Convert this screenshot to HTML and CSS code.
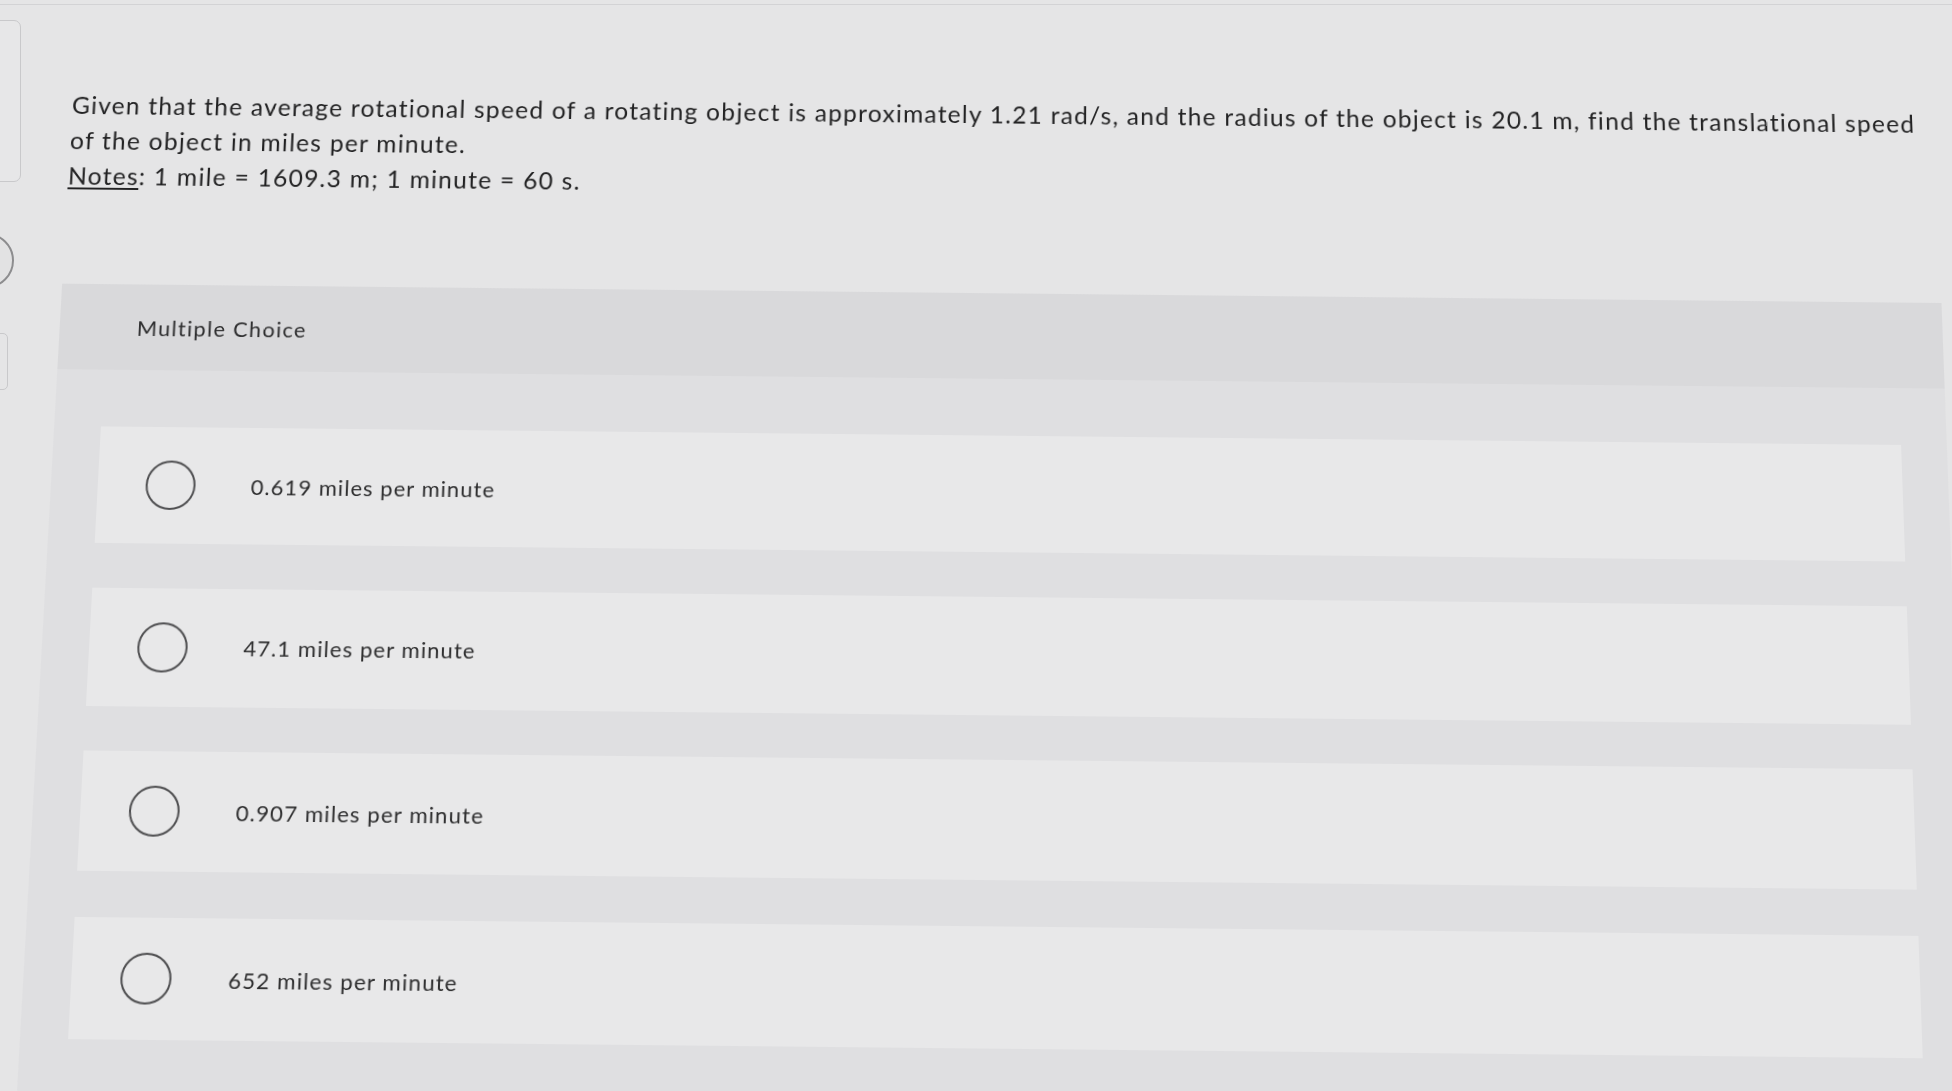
FILE: index.html
```html
<!DOCTYPE html>
<html lang="en">
<head>
<meta charset="utf-8">
<title>Multiple Choice</title>
<link rel="stylesheet" href="styles.css">
</head>
<body>
<div class="screen">
  <main class="page">
    <div class="question">
      <p>Given that the average rotational speed of a rotating object is approximately 1.21 rad/s, and the radius of the object is 20.1 m, find the translational speed of the object in miles per minute.</p>
      <p><span class="notes-label">Notes</span>: 1 mile = 1609.3 m; 1 minute = 60 s.</p>
    </div>
    <section class="mc">
      <div class="mc-head">Multiple Choice</div>
      <div class="mc-body">
        <label class="opt"><span class="radio"></span><span class="opt-text">0.619 miles per minute</span></label>
        <label class="opt"><span class="radio"></span><span class="opt-text">47.1 miles per minute</span></label>
        <label class="opt"><span class="radio"></span><span class="opt-text">0.907 miles per minute</span></label>
        <label class="opt"><span class="radio"></span><span class="opt-text">652 miles per minute</span></label>
      </div>
    </section>
  </main>
  <div class="chrome">
    <div class="topline"></div>
    <div class="rail-card"></div>
    <div class="rail-dot"></div>
    <div class="rail-tab"></div>
  </div>
</div>
</body>
</html>
```
FILE: styles.css
```css
html, body {
  margin: 0;
  padding: 0;
  background: #e5e5e6;
}
body {
  font-family: Lato, "Liberation Sans", sans-serif;
  color: #222223;
}
.screen {
  display: grid;
  width: 1952px;
  height: 1091px;
  overflow: hidden;
}
.page {
  grid-area: 1 / 1;
  width: 1952px;
  height: 1091px;
  box-sizing: border-box;
  padding: 83px 1px 0 48px;
  display: flex;
  flex-direction: column;
  transform-origin: 976px 545px;
  transform: rotate(0.59deg) perspective(2500px) rotateX(7deg);
}
.question {
  font-size: 25px;
  line-height: 37px;
  letter-spacing: 1.3px;
  padding-right: 7px;
}
.question p {
  margin: 0;
}
.notes-label {
  text-decoration: underline;
  text-decoration-thickness: 2px;
  text-underline-offset: 3px;
}
.mc {
  margin-top: 94px;
  flex: 1;
  background: #dfdfe1;
}
.mc-head {
  height: 88px;
  display: flex;
  align-items: center;
  padding-left: 78px;
  background: #d9d9db;
  font-size: 22px;
  letter-spacing: 1.3px;
  color: #2e2e2f;
}
.mc-body {
  display: flex;
  flex-direction: column;
  gap: 44.7px;
  padding: 58px 46px 60px 46.5px;
}
.opt {
  display: flex;
  align-items: center;
  height: 118px;
  padding-left: 48px;
  background: #e8e8e9;
}
.radio {
  flex: none;
  width: 50px;
  height: 50px;
  box-sizing: border-box;
  border: 2px solid #505052;
  border-radius: 50%;
}
.opt-text {
  margin-left: 56px;
  font-size: 22px;
  letter-spacing: 1.05px;
  color: #2e2e2f;
}
.chrome {
  grid-area: 1 / 1;
  display: flex;
  flex-direction: column;
  align-items: flex-start;
}
.topline {
  align-self: stretch;
  height: 4px;
  border-bottom: 1px solid #d3d3d5;
}
.rail-card {
  margin-top: 15px;
  margin-left: -12px;
  width: 33px;
  height: 162px;
  box-sizing: border-box;
  border: 1.5px solid #c9c9cb;
  border-radius: 7px;
  background: #e7e7e8;
}
.rail-dot {
  margin-top: 51px;
  margin-left: -41px;
  width: 55px;
  height: 55px;
  box-sizing: border-box;
  border: 2px solid #8d8d8f;
  border-radius: 50%;
  background: #e2e2e3;
}
.rail-tab {
  margin-top: 45px;
  margin-left: -12px;
  width: 20px;
  height: 57px;
  box-sizing: border-box;
  border: 1.5px solid #c9c9cb;
  border-radius: 5px;
}
```
